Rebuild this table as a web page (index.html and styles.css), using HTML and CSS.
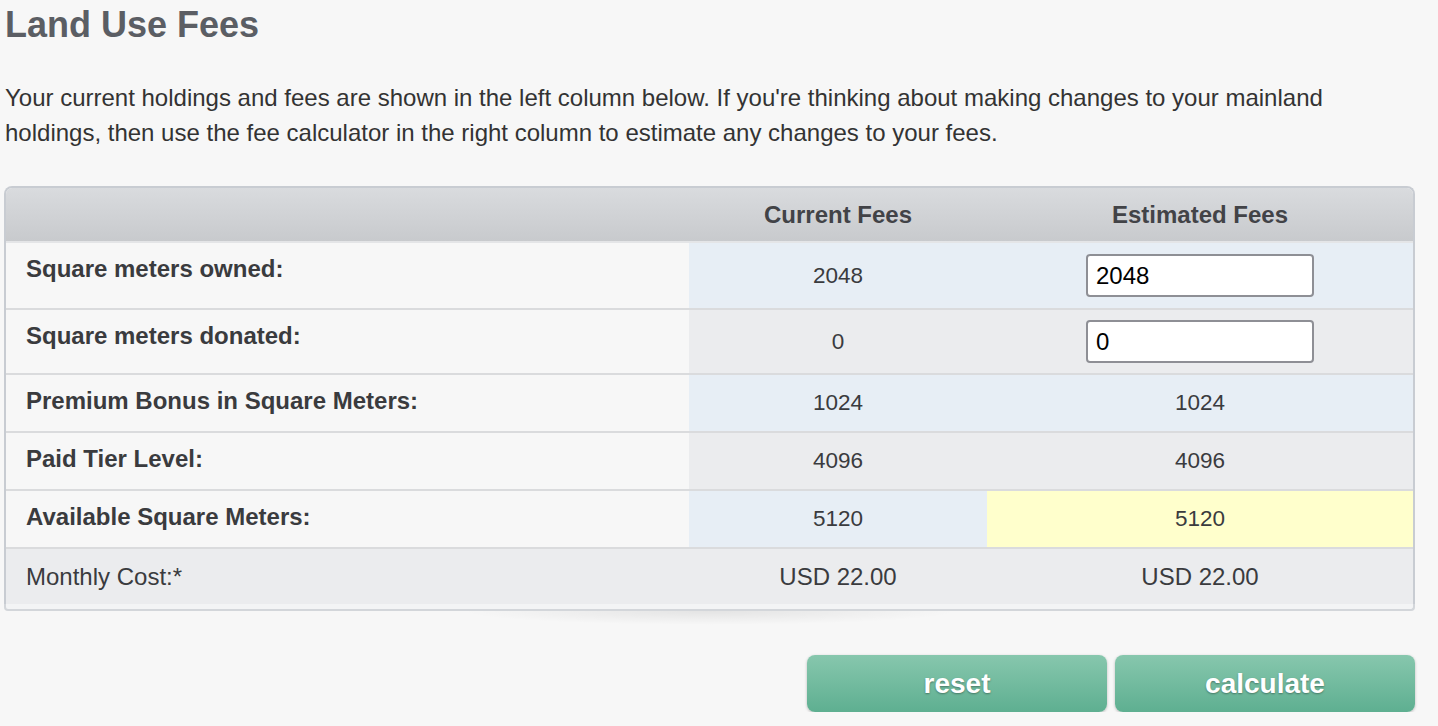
FILE: index.html
```html
<!DOCTYPE html>
<html lang="en">
<head>
    <meta charset="UTF-8">
    <meta name="viewport" content="width=device-width, initial-scale=1.0">
    <title>Land Use Fees</title>
    <link rel="stylesheet" href="styles.css">
</head>
<body>
    <div class="page">
        <h1>Land Use Fees</h1>
        <p class="intro">Your current holdings and fees are shown in the left column below. If you're thinking about making changes to your mainland holdings, then use the fee calculator in the right column to estimate any changes to your fees.</p>

        <div class="fees-box">
            <table class="fees">
                <thead>
                    <tr>
                        <th class="label-col"></th>
                        <th class="current-col">Current Fees</th>
                        <th class="estimate-col">Estimated Fees</th>
                    </tr>
                </thead>
                <tbody>
                    <tr class="row-blue tall">
                        <td class="label">Square meters owned:</td>
                        <td class="value">2048</td>
                        <td class="value"><input type="text" class="fee-input" value="2048"></td>
                    </tr>
                    <tr class="row-grey tall">
                        <td class="label">Square meters donated:</td>
                        <td class="value">0</td>
                        <td class="value"><input type="text" class="fee-input" value="0"></td>
                    </tr>
                    <tr class="row-blue">
                        <td class="label">Premium Bonus in Square Meters:</td>
                        <td class="value">1024</td>
                        <td class="value">1024</td>
                    </tr>
                    <tr class="row-grey">
                        <td class="label">Paid Tier Level:</td>
                        <td class="value">4096</td>
                        <td class="value">4096</td>
                    </tr>
                    <tr class="row-blue">
                        <td class="label">Available Square Meters:</td>
                        <td class="value">5120</td>
                        <td class="value highlight">5120</td>
                    </tr>
                    <tr class="row-total">
                        <td class="label">Monthly Cost:*</td>
                        <td class="value">USD 22.00</td>
                        <td class="value">USD 22.00</td>
                    </tr>
                </tbody>
            </table>
        </div>
        <div class="fees-foot"></div>
        <div class="fees-shadow"></div>

        <div class="button-row">
            <button class="btn" type="reset">reset</button>
            <button class="btn" type="button">calculate</button>
        </div>
    </div>
</body>
</html>
```

FILE: styles.css
```css
html, body {
    margin: 0;
    padding: 0;
}
body {
    background-color: #f7f7f7;
    font-family: "Liberation Sans", Arial, sans-serif;
    color: #333;
}
.page {
    width: 1411px;
    margin-left: 4px;
}
h1 {
    margin: 0;
    padding: 4px 0 0 1px;
    font-size: 36px;
    line-height: 42px;
    font-weight: bold;
    color: #5b5e64;
}
.intro {
    max-width: 1340px;
    margin: 34px 0 0 1px;
    font-size: 24px;
    line-height: 35px;
    color: #333;
}
.fees-box {
    margin-top: 36px;
    border: 2px solid #c8ccd2;
    border-bottom: none;
    border-radius: 8px 8px 0 0;
    overflow: hidden;
}
.fees {
    width: 100%;
    border-collapse: separate;
    border-spacing: 0;
}
.fees thead tr {
    height: 55px;
}
.fees th {
    padding: 0;
    background: linear-gradient(#d9dbde, #c8cacd);
    font-size: 24px;
    font-weight: bold;
    color: #424347;
    text-align: center;
    border-bottom: 2px solid #e4e5e7;
}
.label-col {
    width: 683px;
}
.current-col {
    width: 298px;
}
.fees td {
    border-top: 2px solid #dadbdd;
    padding: 0;
}
.fees tbody tr:first-child td {
    border-top: none;
}
.fees td.label {
    vertical-align: top;
    padding: 12px 0 0 20px;
    font-size: 24px;
    line-height: 28px;
    font-weight: bold;
    color: #3a3b3e;
    background-color: #f7f7f7;
}
.fees td.value {
    text-align: center;
    vertical-align: middle;
    font-size: 22.5px;
    color: #3a3b3e;
}
.fees tbody tr {
    height: 58px;
}
.fees tbody tr.tall {
    height: 65px;
}
.row-blue td.value {
    background-color: #e7eef5;
}
.row-grey td.value {
    background-color: #ebecee;
}
.fees td.value.highlight {
    background-color: #ffffcc;
}
.fees tbody tr.row-total {
    height: 57px;
}
.row-total td,
.fees .row-total td.label {
    background-color: #ebecee;
    vertical-align: middle;
    font-weight: normal;
    padding-top: 0;
}
.fees .row-total td.label,
.fees .row-total td.value {
    font-size: 24px;
}
.fee-input {
    box-sizing: border-box;
    width: 228px;
    height: 43px;
    margin: 0;
    padding: 0 8px;
    border: 2px solid #8e8f95;
    border-radius: 4px;
    background: #fff;
    font-family: "Liberation Sans", Arial, sans-serif;
    font-size: 24px;
    color: #000;
}
.fees-foot {
    height: 5px;
    background-color: #f3f4f5;
    border: 2px solid #d3d6da;
    border-top: none;
    border-radius: 0 0 4px 4px;
}
.fees-shadow {
    height: 14px;
    margin: 0 auto;
    width: 500px;
    background: radial-gradient(ellipse at top, rgba(0, 0, 0, 0.08), rgba(0, 0, 0, 0) 70%);
}
.button-row {
    display: flex;
    justify-content: flex-end;
    gap: 8px;
    margin-top: 30px;
}
.btn {
    width: 300px;
    height: 57px;
    border: none;
    border-radius: 8px;
    background: linear-gradient(#87c7ad, #5eaf91);
    box-shadow: 0 1px 3px rgba(0, 0, 0, 0.25);
    font-family: "Liberation Sans", Arial, sans-serif;
    font-size: 28px;
    font-weight: bold;
    color: #fff;
    text-shadow: 0 1px 2px rgba(0, 0, 0, 0.35);
    cursor: pointer;
}
```
